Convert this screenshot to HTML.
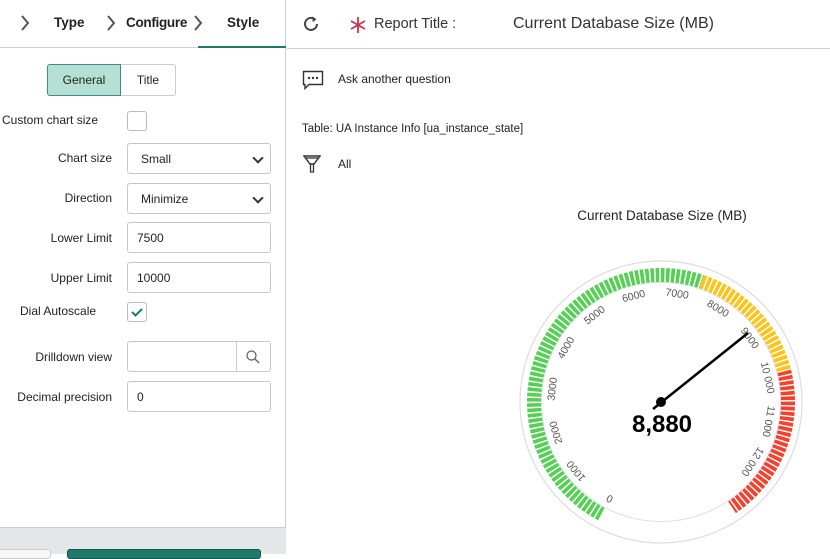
<!DOCTYPE html>
<html><head><meta charset="utf-8"><style>
*{box-sizing:border-box;margin:0;padding:0}
body{width:830px;height:554px;overflow:hidden;background:#fff;font-family:"Liberation Sans",sans-serif;color:#222;position:relative;font-size:12px}
.a{position:absolute}
.lbl{position:absolute;right:718px;text-align:right;white-space:nowrap;font-size:12px;color:#222}
.inp{position:absolute;left:127px;width:144px;height:31px;border:1px solid #c8c8c8;border-radius:3px;padding-left:9px;line-height:30px;font-size:12px;color:#222}
.sel{padding-left:13px}
.sel:after{content:"";position:absolute;right:8px;top:10px;width:6px;height:6px;border-right:2px solid #333;border-bottom:2px solid #333;transform:rotate(45deg)}
.cb{position:absolute;left:127px;width:20px;height:20px;border:1px solid #bbb;border-radius:3px}
</style></head><body>
<div class="a" style="left:0;top:0;width:286px;height:554px;border-right:1px solid #ccc"></div>
<div class="a" style="left:0;top:47px;width:286px;height:1px;background:#d0d0d0"></div>
<div class="a" style="left:198px;top:46px;width:88px;height:2px;background:#1f7a6b"></div>
<svg class="a" style="left:0;top:0" width="286" height="47">
<path d="M22 16l6 7-6 7M108 16l6 7-6 7M195 16l6 7-6 7" fill="none" stroke="#555" stroke-width="2"/>
</svg>
<div class="a" style="left:54px;top:15px;font-size:13.5px;font-weight:bold;color:#222">Type</div>
<div class="a" style="left:126px;top:15px;font-size:13.5px;font-weight:bold;color:#222;letter-spacing:-0.3px">Configure</div>
<div class="a" style="left:227px;top:15px;font-size:13.5px;font-weight:bold;color:#222">Style</div>
<div class="a" style="left:47px;top:64px;width:74px;height:32px;background:#b4e0d6;border:1px solid #3c8f7d;border-radius:3px 0 0 3px;text-align:center;line-height:30px;font-size:12px">General</div>
<div class="a" style="left:121px;top:64px;width:55px;height:32px;border:1px solid #ccc;border-left:none;border-radius:0 3px 3px 0;text-align:center;line-height:30px;font-size:12px">Title</div>
<div class="a" style="left:2px;top:113px">Custom chart size</div>
<div class="cb" style="top:111px"></div>
<div class="lbl" style="top:151px">Chart size</div>
<div class="inp sel" style="top:143px">Small</div>
<div class="lbl" style="top:191px">Direction</div>
<div class="inp sel" style="top:183px">Minimize</div>
<div class="lbl" style="top:231px">Lower Limit</div>
<div class="inp" style="top:222px">7500</div>
<div class="lbl" style="top:271px">Upper Limit</div>
<div class="inp" style="top:262px">10000</div>
<div class="a" style="left:20px;top:304px">Dial Autoscale</div>
<div class="cb" style="top:302px"><svg width="18" height="18"><path d="M4 9l3.5 3.5L14 6" fill="none" stroke="#1f7a6b" stroke-width="2"/></svg></div>
<div class="lbl" style="top:350px">Drilldown view</div>
<div class="inp" style="top:341px"></div>
<div class="a" style="left:236px;top:342px;width:1px;height:29px;background:#ccc"></div>
<svg class="a" style="left:244px;top:348px" width="18" height="18"><circle cx="7.5" cy="7.5" r="4.5" fill="none" stroke="#666" stroke-width="1.3"/><path d="M11 11l4 4" stroke="#666" stroke-width="1.5"/></svg>
<div class="lbl" style="top:390px">Decimal precision</div>
<div class="inp" style="top:381px">0</div>
<div class="a" style="left:0;top:527px;width:286px;height:27px;background:#e4e7ea;border-top:1px solid #ccc"></div>
<div class="a" style="left:-5px;top:549px;width:56px;height:10px;background:#f6f6f6;border:1px solid #ccc;border-radius:3px"></div>
<div class="a" style="left:67px;top:549px;width:194px;height:10px;background:#1f7a6b;border:1px solid #145a4f;border-radius:3px"></div>

<div class="a" style="left:287px;top:48px;width:543px;height:1px;background:#d0d0d0"></div>
<svg class="a" style="left:302px;top:14px" width="20" height="20"><path d="M15 10a6 6 0 1 1-2.2-4.7" fill="none" stroke="#444" stroke-width="2"/><path d="M10 2.5l4.5 2.6-3.6 3.2z" fill="#444"/></svg>
<svg class="a" style="left:349px;top:16px" width="18" height="18"><path d="M9 1v16M2 5l14 8M2 13l14-8" stroke="#c8344c" stroke-width="1.8"/></svg>
<div class="a" style="left:374px;top:16px;font-size:14.5px;color:#333">Report Title :</div>
<div class="a" style="left:513px;top:15px;font-size:16px;color:#333">Current Database Size (MB)</div>
<svg class="a" style="left:302px;top:70px" width="22" height="20"><path d="M1.5 1.5h19v13H7l-4 4v-4H1.5z" fill="none" stroke="#333" stroke-width="1.4"/><circle cx="7" cy="8" r="1.2" fill="#333"/><circle cx="11" cy="8" r="1.2" fill="#333"/><circle cx="15" cy="8" r="1.2" fill="#333"/></svg>
<div class="a" style="left:338px;top:72px;font-size:12px">Ask another question</div>
<div class="a" style="left:302px;top:123px;font-size:11.5px">Table: UA Instance Info [ua_instance_state]</div>
<svg class="a" style="left:303px;top:154px" width="18" height="22"><path d="M1 2h16L11 10H7z" fill="none" stroke="#333" stroke-width="1.4"/><path d="M3 4h12" stroke="#333" stroke-width="1.3"/><path d="M7.5 10v8h3v-8" fill="none" stroke="#333" stroke-width="1.3"/></svg>
<div class="a" style="left:338px;top:157px;font-size:12px">All</div>
<div class="a" style="left:500px;top:208px;width:324px;text-align:center;font-size:13.5px;color:#222">Current Database Size (MB)</div>

<svg class="a" style="left:0;top:0" width="830" height="554">
<circle cx="661" cy="402" r="141" fill="none" stroke="#ddd" stroke-width="1.2"/>
<circle cx="661" cy="402" r="119.5" fill="none" stroke="#dde0ee" stroke-width="1"/>
<g fill="none" stroke-width="14" stroke-dasharray="3.6 1.5">
<path d="M601.38 514.13A127 127 0 0 1 544.36 351.77A127 127 0 0 1 701.51 281.63" stroke="#55d055"/>
<path d="M701.51 281.63A127 127 0 0 1 784.23 371.28" stroke="#fbc41a"/>
<path d="M784.23 371.28A127 127 0 0 1 732.02 507.29" stroke="#f5402c"/>
</g>
<g font-size="10.5" fill="#555" text-anchor="middle" font-family="Liberation Sans, sans-serif">
<text x="661" y="296" transform="rotate(-152 661 402)">0</text>
<text x="661" y="296" transform="rotate(-129.1 661 402)">1000</text>
<text x="661" y="296" transform="rotate(-106.2 661 402)">2000</text>
<text x="661" y="296" transform="rotate(-83.2 661 402)">3000</text>
<text x="661" y="296" transform="rotate(-60.3 661 402)">4000</text>
<text x="661" y="296" transform="rotate(-37.4 661 402)">5000</text>
<text x="661" y="296" transform="rotate(-14.5 661 402)">6000</text>
<text x="661" y="296" transform="rotate(8.5 661 402)">7000</text>
<text x="661" y="296" transform="rotate(31.4 661 402)">8000</text>
<text x="661" y="296" transform="rotate(54.3 661 402)">9000</text>
<text x="661" y="296" transform="rotate(77.2 661 402)">10 000</text>
<text x="661" y="296" transform="rotate(100.2 661 402)">11 000</text>
<text x="661" y="296" transform="rotate(123.1 661 402)">12 000</text>
</g>
<path d="M653 409L748 333" stroke="#000" stroke-width="2.5"/>
<circle cx="661" cy="402" r="5" fill="#000"/>
<text x="662" y="432" text-anchor="middle" font-size="24" font-weight="bold" fill="#000" font-family="Liberation Sans, sans-serif">8,880</text>
</svg>
</body></html>
